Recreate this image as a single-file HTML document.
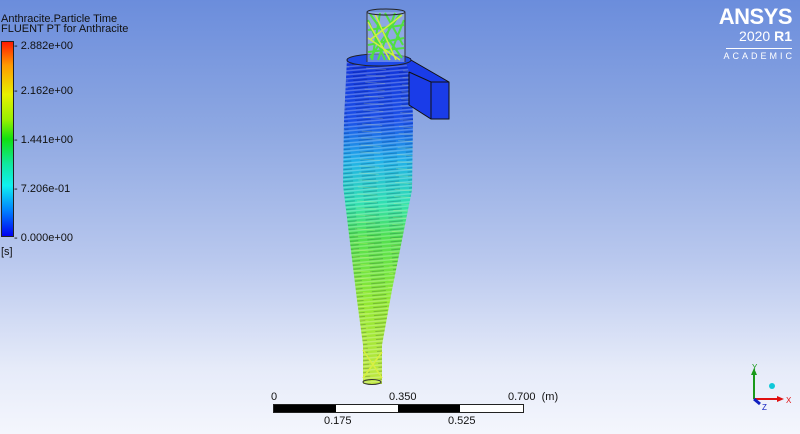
<!DOCTYPE html>
<html><head><style>
html,body{margin:0;padding:0;}
body{width:800px;height:434px;overflow:hidden;position:relative;font-family:"Liberation Sans",sans-serif;
background:linear-gradient(to bottom,#6b8ddc 0%,#8ea8e2 30%,#b9c8ee 60%,#e6ebf9 85%,#f4f6fd 100%);}
.t{position:absolute;font-size:11px;color:#111;line-height:11px;white-space:nowrap;}
</style></head><body>
<div class="t" style="left:1px;top:14px;">Anthracite.Particle Time</div>
<div class="t" style="left:1px;top:24px;">FLUENT PT for Anthracite</div>
<div style="position:absolute;left:1px;top:41px;width:13px;height:196px;border:1px solid #222;box-sizing:border-box;background:linear-gradient(to bottom,#ff1a00 0%,#ff9a00 12%,#e8f000 27%,#98f000 40%,#10e010 50%,#10e8a0 63%,#10f0f0 74%,#0080ff 87%,#0000f0 100%);"></div>
<div class="t" style="left:14px;top:41px;">- 2.882e+00</div>
<div class="t" style="left:14px;top:86px;">- 2.162e+00</div>
<div class="t" style="left:14px;top:135px;">- 1.441e+00</div>
<div class="t" style="left:14px;top:184px;">- 7.206e-01</div>
<div class="t" style="left:14px;top:233px;">- 0.000e+00</div>
<div class="t" style="left:1px;top:247px;">[s]</div>
<div style="position:absolute;right:8px;top:6px;text-align:right;color:#fff;">
<div style="font-size:22px;font-weight:bold;line-height:22px;letter-spacing:-0.5px;">ANSYS</div>
<div style="font-size:14px;line-height:16px;">2020 <b>R1</b></div>
<div style="border-top:1px solid #fff;width:66px;margin:4px 0 0 auto;"></div>
<div style="font-size:9px;letter-spacing:3px;line-height:14px;margin-right:-3px;">ACADEMIC</div>
</div>
<svg style="position:absolute;left:0;top:0" width="800" height="434">
<defs>
<linearGradient id="g" x1="0" y1="55" x2="0" y2="385" gradientUnits="userSpaceOnUse">
<stop offset="0" stop-color="#1030d8"/><stop offset="0.2" stop-color="#1a50e8"/>
<stop offset="0.32" stop-color="#20b0e8"/><stop offset="0.45" stop-color="#30e0b0"/>
<stop offset="0.55" stop-color="#50e050"/><stop offset="0.75" stop-color="#90e830"/>
<stop offset="1" stop-color="#c0e840"/></linearGradient>
<clipPath id="c"><path d="M347,58 L344,120 L343,185 L357,300 L363,345 L363,384 L382,384 L382,345 L392,290 L412,190 L413,120 L411,58 Z"/></clipPath>
<pattern id="p" width="23" height="4" patternUnits="userSpaceOnUse" patternTransform="rotate(-5)">
<rect width="23" height="1.5" fill="rgba(255,255,255,0.25)"/><rect y="2.5" width="14" height="1" fill="rgba(0,0,60,0.2)"/></pattern>
<pattern id="p2" width="37" height="7" patternUnits="userSpaceOnUse" patternTransform="rotate(4)">
<rect width="20" height="1" fill="rgba(255,255,120,0.2)"/></pattern>
</defs>
<g clip-path="url(#c)">
<rect x="330" y="50" width="100" height="340" fill="url(#g)"/>
<rect x="330" y="50" width="100" height="340" fill="url(#p)"/>
<rect x="330" y="50" width="100" height="340" fill="url(#p2)"/>
</g>
<path d="M404,56 L449,82 L449,119 L431,119 L409,105 L409,72" fill="#1a3ce8" stroke="#111" stroke-width="1"/>
<path d="M431,82 L431,119 M409,72 L431,82 L449,82" fill="none" stroke="#111"/>
<ellipse cx="379" cy="60" rx="32" ry="6" fill="#1e4ae8" stroke="#222"/>
<rect x="367" y="12" width="38" height="50" fill="rgba(170,190,230,0.5)"/>
<path d="M370,14 L402,58 M380,13 L372,60 M395,13 L378,60 M368,30 L404,25 M368,45 L404,38 M370,58 L400,14 M385,13 L403,45 M368,20 L385,60 M404,20 L388,60 M368,52 L404,48" stroke="#50e040" stroke-width="2" fill="none"/>
<path d="M375,14 L396,60 M368,22 L390,60 M402,15 L370,40 M368,38 L400,60" stroke="#d0f040" stroke-width="1.5" fill="none"/>
<ellipse cx="386" cy="12" rx="19" ry="3" fill="none" stroke="#222"/>
<path d="M367,12 L367,62 M405,12 L405,62" stroke="#333" fill="none"/>
<ellipse cx="372" cy="382" rx="9" ry="2.5" fill="none" stroke="#333"/>
<path d="M363,350 L382,378 M382,352 L363,378" stroke="#d8f040" stroke-width="1.5"/>
<rect x="273.5" y="404.5" width="250" height="8" fill="#fff" stroke="#222"/>
<rect x="274" y="405" width="62" height="7" fill="#000"/>
<rect x="398" y="405" width="62" height="7" fill="#000"/>
<path d="M754,399 L754,372" stroke="#1a9a1a" stroke-width="2"/><path d="M751,375 L754,368 L757,375Z" fill="#1a9a1a"/>
<path d="M754,399 L780,399" stroke="#e01010" stroke-width="2"/><path d="M777,396 L784,399 L777,402Z" fill="#e01010"/>
<path d="M754,399 L760,404" stroke="#1020c0" stroke-width="3"/>
<circle cx="772" cy="386" r="3" fill="#10c8d8"/>
</svg>
<div class="t" style="left:271px;top:392px;">0</div>
<div class="t" style="left:389px;top:392px;">0.350</div>
<div class="t" style="left:508px;top:392px;">0.700&nbsp; (m)</div>
<div class="t" style="left:324px;top:416px;">0.175</div>
<div class="t" style="left:448px;top:416px;">0.525</div>
<div class="t" style="left:752px;top:362px;font-size:8px;color:#1a9a1a;">Y</div>
<div class="t" style="left:786px;top:395px;font-size:8px;color:#e01010;">X</div>
<div class="t" style="left:762px;top:402px;font-size:8px;color:#1020c0;">Z</div>
</body></html>
